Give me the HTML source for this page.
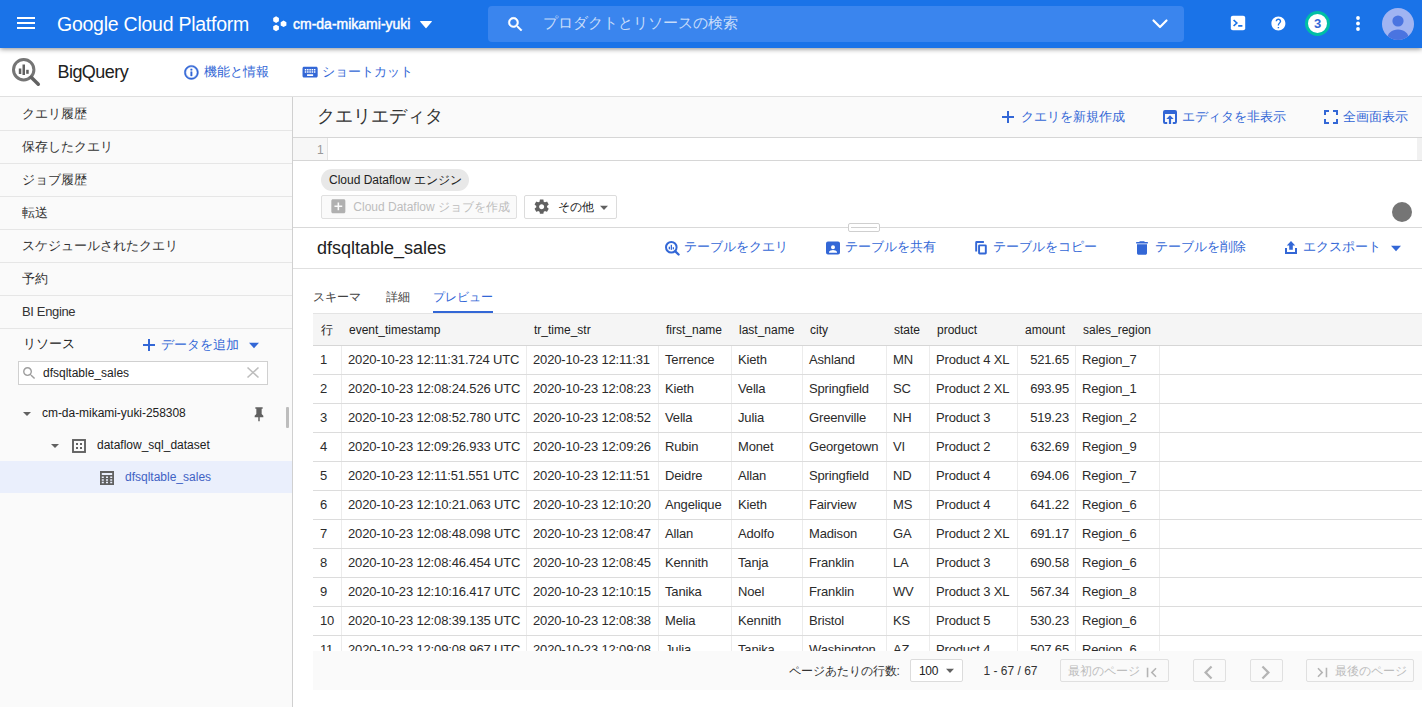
<!DOCTYPE html>
<html lang="ja">
<head>
<meta charset="utf-8">
<title>BigQuery</title>
<style>
*{box-sizing:border-box;margin:0;padding:0}
html,body{width:1422px;height:707px;overflow:hidden;background:#fff}
body{font-family:"Liberation Sans",sans-serif;font-size:13px;color:#212121;position:relative}
.abs{position:absolute}
svg{display:block;position:absolute}
.t{position:absolute;white-space:nowrap;line-height:1}

/* top bar */
#top{position:absolute;left:0;top:0;width:1422px;height:48px;background:#1a73e8;box-shadow:0 1px 5px rgba(0,0,0,.45);z-index:5}
#search{position:absolute;left:488px;top:6px;width:696px;height:36px;border-radius:4px;background:#3a85ee}
/* sub bar */
#sub{position:absolute;left:0;top:48px;width:1422px;height:49px;background:#fff;border-bottom:1px solid #e0e0e0;z-index:3}
.blue{color:#3367d6}

/* sidebar */
#side{position:absolute;left:0;top:97px;width:293px;height:610px;background:#fafafa;border-right:1px solid #d0d0d0}
.nav{position:absolute;left:0;width:292px;height:33px;border-bottom:1px solid #e6e6e6}
.nav span{position:absolute;left:22px;top:7.5px;font-size:13px;line-height:16px;white-space:nowrap;color:#333}

/* main */
#main{position:absolute;left:293px;top:97px;width:1129px;height:610px;background:#fff}

/* table */
#tbl{position:absolute;left:20px;top:216px;width:1109px;height:338px;overflow:hidden;background:#fff}
#tbl .hd{position:absolute;left:0;top:0;width:1109px;height:33px;background:#f5f5f5;border-top:1px solid #e4e4e4;border-bottom:1px solid #d6d6d6}
#tbl .hd span{position:absolute;top:0;height:32px;line-height:32.500px;font-size:12px;color:#212121;white-space:nowrap;padding-left:8px;overflow:hidden}
#tbl .r{position:absolute;left:0;width:1109px;height:29px;border-bottom:1px solid #dcdcdc}
#tbl .r span{position:absolute;top:0;height:28px;line-height:28px;font-size:13px;letter-spacing:-.15px;color:#2b2b2b;white-space:nowrap;padding-left:6px;border-left:1px solid #ececec;overflow:hidden}
#tbl .r span.c0{border-left:0;padding-left:7px}
#tbl .r span.c8{text-align:right;padding-right:6px;padding-left:0}
.c0{left:0px;width:28px}
.c1{left:28px;width:185px}
.c2{left:213px;width:132px}
.c3{left:345px;width:73px}
.c4{left:418px;width:71px}
.c5{left:489px;width:84px}
.c6{left:573px;width:43px}
.c7{left:616px;width:88px}
.c8{left:704px;width:58px}
.c9{left:762px;width:84px}
.c10{left:846px;width:263px}

/* footer */
#ft{position:absolute;left:20px;top:554px;width:1109px;height:39px;background:#fafafa}
.fb{position:absolute;top:8.500px;height:23px;border:1px solid #e0e0e0;border-radius:2px}
</style>
</head>
<body>

<div id="top">
  <svg style="left:14px;top:11px" width="24" height="24" viewBox="0 0 24 24"><path fill="#fff" d="M3 18h18v-2H3v2zm0-5h18v-2H3v2zm0-7v2h18V6H3z"/></svg>
  <div class="t" id="gcp" style="left:57px;top:15.3px;font-size:19.5px;letter-spacing:-.25px;color:#fff">Google Cloud Platform</div>
  <svg style="left:271.300px;top:15.300px" width="17.600" height="17.600" viewBox="0 0 16 16"><g fill="#fff"><path d="M4.6 1.2 7.2 2.7v3L4.6 7.2 2 5.7v-3z"/><path d="M4.6 8.8 7.2 10.3v3L4.6 14.8 2 13.3v-3z"/><path d="M11.4 5 14 6.5v3L11.4 11 8.8 9.5v-3z"/></g></svg>
  <div class="t" id="proj" style="left:293px;top:17px;font-size:14px;color:#fff;-webkit-text-stroke:.45px #fff">cm-da-mikami-yuki</div>
  <svg style="left:419px;top:20px" width="14" height="9" viewBox="0 0 14 9"><path fill="#fff" d="M1.6 1h10.8a.5.5 0 0 1 .4.8L7.4 8a.5.5 0 0 1-.8 0L1.2 1.8a.5.5 0 0 1 .4-.8z"/></svg>
  <div id="search">
    <svg style="left:17.500px;top:9px" width="18.800" height="18.800" viewBox="0 0 24 24"><path fill="#fff" stroke="#fff" stroke-width=".7" d="M15.5 14h-.79l-.28-.27A6.471 6.471 0 0 0 16 9.5 6.5 6.5 0 1 0 9.5 16c1.61 0 3.09-.59 4.23-1.57l.27.28v.79l5 4.99L20.49 19l-4.99-5zm-6 0C7.01 14 5 11.99 5 9.5S7.01 5 9.5 5 14 7.01 14 9.5 11.99 14 9.5 14z"/></svg>
    <div class="t" style="left:55px;top:9px;font-size:15px;color:rgba(255,255,255,.72)">プロダクトとリソースの検索</div>
    <svg style="left:663px;top:12px" width="18" height="12" viewBox="0 0 18 12"><path fill="none" stroke="#fff" stroke-width="2.2" stroke-linecap="round" stroke-linejoin="round" d="M2.5 2.5 9 9l6.500-6.500"/></svg>
  </div>
  <svg style="left:1230px;top:15px" width="16" height="16" viewBox="0 0 16 16"><rect x=".8" y=".8" width="14.4" height="14.4" rx="2" fill="#fff"/><path fill="none" stroke="#1a73e8" stroke-width="1.7" d="M3.6 5 6.8 8 3.600 11M8.200 10.800h4.200"/></svg>
  <svg style="left:1269.600px;top:14.600px" width="16.800" height="16.800" viewBox="0 0 24 24"><path fill="#fff" d="M12 2C6.480 2 2 6.480 2 12s4.480 10 10 10 10-4.480 10-10S17.520 2 12 2zm1 17h-2v-2h2v2zm2.070-7.750l-.9.920C13.450 12.900 13 13.500 13 15h-2v-.5c0-1.100.450-2.100 1.170-2.830l1.240-1.260c.370-.360.590-.860.590-1.410 0-1.100-.900-2-2-2s-2 .900-2 2H8c0-2.210 1.790-4 4-4s4 1.790 4 4c0 .880-.360 1.680-.930 2.250z"/></svg>
  <div class="abs" style="left:1305px;top:11px;width:25px;height:25px;border-radius:50%;background:#fff;border:3px solid #00bfa5"></div>
  <div class="t" style="left:1305px;top:17px;width:25px;text-align:center;font-size:13px;font-weight:bold;color:#3367d6">3</div>
  <svg style="left:1346px;top:11px" width="24" height="24" viewBox="0 0 24 24"><g fill="#fff"><circle cx="12" cy="7" r="1.9"/><circle cx="12" cy="12.500" r="1.9"/><circle cx="12" cy="18" r="1.9"/></g></svg>
  <svg style="left:1382px;top:7.500px" width="32" height="32" viewBox="0 0 32 32"><defs><clipPath id="av"><circle cx="16" cy="16" r="16"/></clipPath></defs><circle cx="16" cy="16" r="16" fill="#a0b4f2"/><g clip-path="url(#av)" fill="#4a74e0"><circle cx="16" cy="13" r="5.600"/><path d="M5 32c0-7 5-10.500 11-10.500S27 25 27 32z"/></g></svg>
</div>

<div id="sub">
  <svg style="left:11px;top:9px" width="30" height="30" viewBox="0 0 30 30"><circle cx="12.700" cy="12.700" r="10.200" fill="none" stroke="#757575" stroke-width="3"/><path d="M20.200 20.200 27.300 27.300" stroke="#616161" stroke-width="3.400" stroke-linecap="round"/><g fill="#616161"><rect x="7.800" y="11.500" width="2.500" height="5.500"/><rect x="11.500" y="7.500" width="2.500" height="10.500"/><rect x="15.200" y="12.800" width="2.500" height="4"/></g></svg>
  <div class="t" style="left:57.500px;top:15px;font-size:18px;letter-spacing:-.55px;color:#212121">BigQuery</div>
  <svg style="left:182.600px;top:15.600px" width="16.800" height="16.800" viewBox="0 0 24 24"><path fill="#3367d6" stroke="#3367d6" stroke-width=".7" d="M11 17h2v-6h-2v6zm1-15C6.480 2 2 6.480 2 12s4.480 10 10 10 10-4.480 10-10S17.520 2 12 2zm0 18c-4.410 0-8-3.590-8-8s3.590-8 8-8 8 3.590 8 8-3.590 8-8 8zM11 9h2V7h-2v2z"/></svg>
  <div class="t blue" style="left:203.500px;top:16.500px;font-size:13px">機能と情報</div>
  <svg style="left:300.700px;top:14.700px" width="18.200" height="18.200" viewBox="0 0 24 24"><path fill="#3367d6" d="M20 5H4c-1.100 0-1.990.900-1.990 2L2 17c0 1.100.900 2 2 2h16c1.100 0 2-.900 2-2V7c0-1.100-.900-2-2-2zm-9 3h2v2h-2V8zm0 3h2v2h-2v-2zM8 8h2v2H8V8zm0 3h2v2H8v-2zm-1 2H5v-2h2v2zm0-3H5V8h2v2zm9 7H8v-2h8v2zm0-4h-2v-2h2v2zm0-3h-2V8h2v2zm3 3h-2v-2h2v2zm0-3h-2V8h2v2z"/></svg>
  <div class="t blue" style="left:322px;top:16.500px;font-size:13px">ショートカット</div>
</div>

<div id="side">
  <div class="nav" style="top:1px"><span>クエリ履歴</span></div>
  <div class="nav" style="top:34px"><span>保存したクエリ</span></div>
  <div class="nav" style="top:67px"><span>ジョブ履歴</span></div>
  <div class="nav" style="top:100px"><span>転送</span></div>
  <div class="nav" style="top:133px"><span>スケジュールされたクエリ</span></div>
  <div class="nav" style="top:166px"><span>予約</span></div>
  <div class="nav" style="top:199px"><span style="letter-spacing:-.35px">BI Engine</span></div>
  <div class="t" style="left:22.500px;top:240px;font-size:13px;color:#212121">リソース</div>
  <svg style="left:141px;top:239.500px" width="16" height="16" viewBox="0 0 16 16"><path d="M8 2v12M2 8h12" stroke="#3367d6" stroke-width="2" fill="none"/></svg>
  <div class="t blue" style="left:161px;top:241px;font-size:13px">データを追加</div>
  <svg style="left:248px;top:245px" width="12" height="7" viewBox="0 0 12 7"><path fill="#3367d6" d="M1 .8h10L6 6.200z"/></svg>
  <div class="abs" style="left:18px;top:264px;width:250px;height:24px;background:#fff;border:1px solid #d0d0d0"></div>
  <svg style="left:21px;top:268px" width="16.500" height="16.500" viewBox="0 0 24 24"><path fill="#9e9e9e" d="M15.500 14h-.790l-.280-.270A6.471 6.471 0 0 0 16 9.500 6.500 6.500 0 1 0 9.500 16c1.610 0 3.090-.590 4.230-1.570l.270.280v.790l5 4.990L20.490 19l-4.990-5zm-6 0C7.010 14 5 11.990 5 9.500S7.010 5 9.500 5 14 7.010 14 9.500 11.990 14 9.500 14z"/></svg>
  <div class="t" style="left:43px;top:270px;font-size:12px;color:#212121">dfsqltable_sales</div>
  <svg style="left:246px;top:269px" width="14" height="13" viewBox="0 0 14 13"><path d="M1.500 1.500 12.500 11.500M12.500 1.500 1.500 11.500" stroke="#bdbdbd" stroke-width="1.600" fill="none"/></svg>

  <svg style="left:22px;top:314px" width="10" height="6" viewBox="0 0 10 6"><path fill="#616161" d="M1 1h8L5 5z"/></svg>
  <div class="t" style="left:42px;top:310px;font-size:12px;color:#212121;letter-spacing:-.04px">cm-da-mikami-yuki-258308</div>
  <svg style="left:251px;top:309px" width="16" height="16" viewBox="0 0 24 24"><path fill="#616161" d="M16 12V4h1.500V1.800h-11V4H8v8l-2.500 2.500v2.200h5.400V23h2.200v-6.300h5.400v-2.200z"/></svg>
  <div class="abs" style="left:286px;top:310px;width:3px;height:21px;background:#bdbdbd;border-radius:1px"></div>

  <svg style="left:50px;top:346px" width="10" height="6" viewBox="0 0 10 6"><path fill="#616161" d="M1 1h8L5 5z"/></svg>
  <svg style="left:72px;top:342px" width="14" height="14" viewBox="0 0 14 14"><rect x="1" y="1" width="12" height="12" fill="none" stroke="#616161" stroke-width="1.900"/><g fill="#616161"><rect x="4" y="4" width="2" height="2"/><rect x="8" y="4" width="2" height="2"/><rect x="4" y="8" width="2" height="2"/><rect x="8" y="8" width="2" height="2"/></g></svg>
  <div class="t" style="left:97px;top:342px;font-size:12px;color:#212121">dataflow_sql_dataset</div>

  <div class="abs" style="left:0;top:364px;width:292px;height:32px;background:#eaeffc"></div>
  <svg style="left:100px;top:374px" width="14" height="14" viewBox="0 0 14 14"><path fill="#616161" fill-rule="evenodd" d="M0 0h14v14H0zM1.800 2h10.400v2H1.800zM1.8 5.6h2v1.500h-2zM6.0 5.6h2v1.500h-2zM10.2 5.6h2v1.500h-2zM1.8 8.2h2v1.500h-2zM6.0 8.2h2v1.500h-2zM10.2 8.2h2v1.500h-2zM1.8 10.8h2v1.500h-2zM6.0 10.8h2v1.500h-2zM10.2 10.8h2v1.500h-2z"/></svg>
  <div class="t" style="left:125px;top:374px;font-size:12px;color:#3f62c4">dfsqltable_sales</div>
</div>

<div id="main">
  <!-- query editor header -->
  <div class="abs" style="left:0;top:0;width:1129px;height:41px;background:#fafafa;border-bottom:1px solid #d6d6d6"></div>
  <div class="t" style="left:24px;top:9.5px;font-size:18px;color:#333">クエリエディタ</div>
  <svg style="left:708px;top:13px" width="14" height="14" viewBox="0 0 14 14"><path d="M7 1v12M1 7h12" stroke="#3367d6" stroke-width="2" fill="none"/></svg>
  <div class="t blue" style="left:728px;top:12.8px;font-size:13px">クエリを新規作成</div>
  <svg style="left:870px;top:13px" width="14" height="14" viewBox="0 0 14 14"><path fill="#3367d6" d="M2 0h10a2 2 0 0 1 2 2v10a2 2 0 0 1-2 2h-2.200v-2H12V4H2v8h2.200v2H2a2 2 0 0 1-2-2V2a2 2 0 0 1 2-2z"/><path fill="#3367d6" d="M7 5.300l3.700 3.800H8.100V14H5.900V9.100H3.300z"/></svg>
  <div class="t blue" style="left:889px;top:12.8px;font-size:13px">エディタを非表示</div>
  <svg style="left:1031px;top:13px" width="14" height="14" viewBox="0 0 14 14"><path fill="none" stroke="#3367d6" stroke-width="2" d="M1 5V1h4M9 1h4v4M13 9v4H9M5 13H1V9"/></svg>
  <div class="t blue" style="left:1050px;top:12.8px;font-size:13px">全画面表示</div>

  <!-- editor line -->
  <div class="abs" style="left:0;top:41px;width:1129px;height:23px;background:#fff;border-bottom:1px solid #d6d6d6"></div>
  <div class="abs" style="left:0;top:41px;width:35px;height:22px;background:#f7f7f7;border-right:1px solid #e4e4e4"></div>
  <div class="t" style="left:24px;top:46.5px;font-size:12px;color:#999">1</div>
  <div class="abs" style="left:1124px;top:41px;width:5px;height:22px;background:#f1f1f1"></div>

  <!-- chip + buttons -->
  <div class="abs" style="left:28px;top:72px;width:148px;height:22px;border-radius:11px;background:#e8e8e8"></div>
  <div class="t" style="left:36px;top:77px;font-size:12px;color:#212121">Cloud Dataflow エンジン</div>

  <div class="abs" style="left:28px;top:98px;width:196px;height:24px;border:1px solid #e0e0e0;border-radius:2px;background:#fafafa"></div>
  <svg style="left:35.7px;top:100.4px" width="18.700" height="18.700" viewBox="0 0 24 24"><path fill="#b0b0b0" d="M19 3H5c-1.110 0-2 .900-2 2v14c0 1.100.890 2 2 2h14c1.100 0 2-.900 2-2V5c0-1.100-.900-2-2-2zm-2 10h-4v4h-2v-4H7v-2h4V7h2v4h4v2z"/></svg>
  <div class="t" style="left:60.3px;top:104px;font-size:12px;color:#bdbdbd">Cloud Dataflow ジョブを作成</div>

  <div class="abs" style="left:231px;top:98px;width:93px;height:24px;border:1px solid #dcdcdc;border-radius:2px;background:#fff"></div>
  <svg style="left:239.6px;top:101.3px" width="17.300" height="17.300" viewBox="0 0 24 24"><path fill="#616161" d="M19.430 12.980c.040-.320.070-.640.070-.980s-.030-.660-.070-.980l2.110-1.650c.190-.150.240-.420.120-.640l-2-3.460c-.120-.220-.390-.300-.610-.220l-2.490 1c-.520-.400-1.080-.730-1.690-.980l-.380-2.650C14.460 2.180 14.250 2 14 2h-4c-.250 0-.460.180-.490.420l-.380 2.650c-.610.250-1.170.590-1.690.980l-2.490-1c-.230-.090-.490 0-.610.220l-2 3.460c-.130.220-.070.490.120.640l2.110 1.650c-.040.320-.070.650-.070.980s.030.660.070.980l-2.110 1.650c-.190.150-.240.420-.120.640l2 3.460c.120.220.390.300.610.220l2.490-1c.520.400 1.080.730 1.690.980l.380 2.650c.030.240.240.420.490.420h4c.250 0 .460-.180.490-.420l.380-2.650c.610-.250 1.170-.590 1.690-.980l2.490 1c.230.090.490 0 .610-.220l2-3.460c.120-.220.070-.490-.120-.640l-2.110-1.650zM12 15.500c-1.930 0-3.500-1.570-3.500-3.500s1.570-3.500 3.500-3.500 3.500 1.570 3.500 3.500-1.570 3.500-3.500 3.500z"/></svg>
  <div class="t" style="left:264.5px;top:104px;font-size:12px;color:#212121">その他</div>
  <svg style="left:306px;top:107.5px" width="10" height="6" viewBox="0 0 10 6"><path fill="#616161" d="M1 .8h8L5 5z"/></svg>

  <div class="abs" style="left:1099px;top:105px;width:20px;height:20px;border-radius:50%;background:#757575"></div>

  <!-- splitter -->
  <div class="abs" style="left:0;top:130px;width:1129px;height:1px;background:#d9d9d9"></div>
  <div class="abs" style="left:555px;top:126px;width:32px;height:9px;border:1px solid #cfcfcf;border-radius:2px;background:#fff"></div>
  <div class="abs" style="left:558px;top:130px;width:26px;height:1px;background:#d0d0d0"></div>

  <!-- title + actions -->
  <div class="t" style="left:24px;top:142px;font-size:18px;color:#212121">dfsqltable_sales</div>

  <svg style="left:371px;top:143px" width="16" height="16" viewBox="0 0 16 16"><circle cx="7.300" cy="7.200" r="5.300" fill="none" stroke="#3367d6" stroke-width="2"/><path d="M11.300 11.300 14.600 14.500" stroke="#3367d6" stroke-width="2.300" stroke-linecap="round"/><g fill="#3367d6"><rect x="4.700" y="6.700" width="1.300" height="2.600"/><rect x="6.700" y="4.800" width="1.300" height="5"/><rect x="8.700" y="7.200" width="1.300" height="2.100"/></g></svg>
  <div class="t blue" style="left:391.3px;top:143px;font-size:13px">テーブルをクエリ</div>

  <svg style="left:531.5px;top:143px" width="16" height="16" viewBox="0 0 16 16"><path fill="#3367d6" fill-rule="evenodd" d="M3 1.500h10a2 2 0 0 1 2 2v9a2 2 0 0 1-2 2H3a2 2 0 0 1-2-2v-9a2 2 0 0 1 2-2zM3.500 3v.010h9V3zM8 5.200a2 2 0 1 0 0 4 2 2 0 0 0 0-4zM4 12.700h8v-.700c0-1.400-2.700-2.100-4-2.100s-4 .700-4 2.100z"/></svg>
  <div class="t blue" style="left:552.3px;top:143px;font-size:13px">テーブルを共有</div>

  <svg style="left:682px;top:144px" width="12" height="13.500" viewBox="0 0 12 14"><path fill="#3367d6" d="M0 11V1.500A1.500 1.500 0 0 1 1.500 0H9v2H2v9z"/><path fill="#3367d6" fill-rule="evenodd" d="M4.500 3.500h6A1.500 1.500 0 0 1 12 5v7.500a1.500 1.500 0 0 1-1.500 1.500h-6A1.500 1.500 0 0 1 3 12.500V5a1.500 1.500 0 0 1 1.500-1.500zM5 5.500V12h5V5.500z"/></svg>
  <div class="t blue" style="left:699.8px;top:143px;font-size:13px">テーブルをコピー</div>

  <svg style="left:839.4px;top:141.7px" width="20" height="18.100" viewBox="0 0 24 24" preserveAspectRatio="none"><path fill="#3367d6" d="M6 19c0 1.100.900 2 2 2h8c1.100 0 2-.900 2-2V7H6v12zM19 4h-3.500l-1-1h-5l-1 1H5v2h14V4z"/></svg>
  <div class="t blue" style="left:861.9px;top:143px;font-size:13px">テーブルを削除</div>

  <svg style="left:992px;top:144px" width="12" height="13.200" viewBox="0 0 12 13"><path fill="#3367d6" d="M6 0 10.200 4.300H7.800V8.600H4.200V4.300H1.800z"/><path fill="#3367d6" d="M0 7h2v4h8V7h2v6H0z"/></svg>
  <div class="t blue" style="left:1010px;top:143px;font-size:13px">エクスポート</div>
  <svg style="left:1097px;top:147.8px" width="12" height="7" viewBox="0 0 12 7"><path fill="#3367d6" d="M1 .8h10L6 6.200z"/></svg>

  <div class="abs" style="left:0;top:171px;width:1129px;height:1px;background:#e0e0e0"></div>

  <!-- tabs -->
  <div class="t" style="left:20px;top:193.7px;font-size:12px;color:#424242">スキーマ</div>
  <div class="t" style="left:92.5px;top:193.7px;font-size:12px;color:#424242">詳細</div>
  <div class="t" style="left:140px;top:193.7px;font-size:12px;color:#3367d6">プレビュー</div>
  <div class="abs" style="left:140px;top:214px;width:60px;height:2px;background:#3367d6"></div>

  <div id="tbl">
    <div class="hd"><span class="c0">行</span><span class="c1">event_timestamp</span><span class="c2">tr_time_str</span><span class="c3">first_name</span><span class="c4">last_name</span><span class="c5">city</span><span class="c6">state</span><span class="c7">product</span><span class="c8">amount</span><span class="c9">sales_region</span></div>
    <div class="r" style="top:33px"><span class="c0">1</span><span class="c1">2020-10-23 12:11:31.724 UTC</span><span class="c2">2020-10-23 12:11:31</span><span class="c3">Terrence</span><span class="c4">Kieth</span><span class="c5">Ashland</span><span class="c6">MN</span><span class="c7">Product 4 XL</span><span class="c8">521.65</span><span class="c9">Region_7</span><span class="c10"></span></div>
    <div class="r" style="top:62px"><span class="c0">2</span><span class="c1">2020-10-23 12:08:24.526 UTC</span><span class="c2">2020-10-23 12:08:23</span><span class="c3">Kieth</span><span class="c4">Vella</span><span class="c5">Springfield</span><span class="c6">SC</span><span class="c7">Product 2 XL</span><span class="c8">693.95</span><span class="c9">Region_1</span><span class="c10"></span></div>
    <div class="r" style="top:91px"><span class="c0">3</span><span class="c1">2020-10-23 12:08:52.780 UTC</span><span class="c2">2020-10-23 12:08:52</span><span class="c3">Vella</span><span class="c4">Julia</span><span class="c5">Greenville</span><span class="c6">NH</span><span class="c7">Product 3</span><span class="c8">519.23</span><span class="c9">Region_2</span><span class="c10"></span></div>
    <div class="r" style="top:120px"><span class="c0">4</span><span class="c1">2020-10-23 12:09:26.933 UTC</span><span class="c2">2020-10-23 12:09:26</span><span class="c3">Rubin</span><span class="c4">Monet</span><span class="c5">Georgetown</span><span class="c6">VI</span><span class="c7">Product 2</span><span class="c8">632.69</span><span class="c9">Region_9</span><span class="c10"></span></div>
    <div class="r" style="top:149px"><span class="c0">5</span><span class="c1">2020-10-23 12:11:51.551 UTC</span><span class="c2">2020-10-23 12:11:51</span><span class="c3">Deidre</span><span class="c4">Allan</span><span class="c5">Springfield</span><span class="c6">ND</span><span class="c7">Product 4</span><span class="c8">694.06</span><span class="c9">Region_7</span><span class="c10"></span></div>
    <div class="r" style="top:178px"><span class="c0">6</span><span class="c1">2020-10-23 12:10:21.063 UTC</span><span class="c2">2020-10-23 12:10:20</span><span class="c3">Angelique</span><span class="c4">Kieth</span><span class="c5">Fairview</span><span class="c6">MS</span><span class="c7">Product 4</span><span class="c8">641.22</span><span class="c9">Region_6</span><span class="c10"></span></div>
    <div class="r" style="top:207px"><span class="c0">7</span><span class="c1">2020-10-23 12:08:48.098 UTC</span><span class="c2">2020-10-23 12:08:47</span><span class="c3">Allan</span><span class="c4">Adolfo</span><span class="c5">Madison</span><span class="c6">GA</span><span class="c7">Product 2 XL</span><span class="c8">691.17</span><span class="c9">Region_6</span><span class="c10"></span></div>
    <div class="r" style="top:236px"><span class="c0">8</span><span class="c1">2020-10-23 12:08:46.454 UTC</span><span class="c2">2020-10-23 12:08:45</span><span class="c3">Kennith</span><span class="c4">Tanja</span><span class="c5">Franklin</span><span class="c6">LA</span><span class="c7">Product 3</span><span class="c8">690.58</span><span class="c9">Region_6</span><span class="c10"></span></div>
    <div class="r" style="top:265px"><span class="c0">9</span><span class="c1">2020-10-23 12:10:16.417 UTC</span><span class="c2">2020-10-23 12:10:15</span><span class="c3">Tanika</span><span class="c4">Noel</span><span class="c5">Franklin</span><span class="c6">WV</span><span class="c7">Product 3 XL</span><span class="c8">567.34</span><span class="c9">Region_8</span><span class="c10"></span></div>
    <div class="r" style="top:294px"><span class="c0">10</span><span class="c1">2020-10-23 12:08:39.135 UTC</span><span class="c2">2020-10-23 12:08:38</span><span class="c3">Melia</span><span class="c4">Kennith</span><span class="c5">Bristol</span><span class="c6">KS</span><span class="c7">Product 5</span><span class="c8">530.23</span><span class="c9">Region_6</span><span class="c10"></span></div>
    <div class="r" style="top:323px"><span class="c0">11</span><span class="c1">2020-10-23 12:09:08.967 UTC</span><span class="c2">2020-10-23 12:09:08</span><span class="c3">Julia</span><span class="c4">Tanika</span><span class="c5">Washington</span><span class="c6">AZ</span><span class="c7">Product 4</span><span class="c8">507.65</span><span class="c9">Region_6</span><span class="c10"></span></div>
  </div>
  <div id="ft">
    <div class="t" style="left:475.5px;top:13.5px;font-size:12px;color:#333">ページあたりの行数:</div>
    <div class="fb" style="left:597px;top:8px;width:52.500px;background:#fff;border-color:#dcdcdc"></div>
    <div class="t" style="left:606px;top:13.5px;font-size:12px;color:#212121;letter-spacing:-.3px">100</div>
    <svg style="left:632px;top:17px" width="10" height="6" viewBox="0 0 10 6"><path fill="#616161" d="M1 .8h8L5 5z"/></svg>
    <div class="t" style="left:670.5px;top:13.5px;font-size:12px;color:#333">1 - 67 / 67</div>

    <div class="fb" style="left:747px;top:8px;width:108.500px"></div>
    <div class="t" style="left:755.3px;top:13.5px;font-size:12px;color:#bdbdbd">最初のページ</div>
    <svg style="left:829px;top:11.5px" width="19" height="19" viewBox="0 0 24 24"><path fill="#b4b4b4" d="M18.410 16.590L13.820 12l4.590-4.590L17 6l-6 6 6 6zM6 6h2v12H6z"/></svg>

    <div class="fb" style="left:879.5px;top:8px;width:33px"></div>
    <svg style="left:882.3px;top:7.5px" width="27" height="27" viewBox="0 0 24 24"><path fill="#b4b4b4" d="M15.410 7.410L14 6l-6 6 6 6 1.410-1.410L10.830 12z"/></svg>
    <div class="fb" style="left:936.5px;top:8px;width:33px"></div>
    <svg style="left:939.4px;top:7.5px" width="27" height="27" viewBox="0 0 24 24"><path fill="#b4b4b4" d="M10 6L8.590 7.410 13.170 12l-4.580 4.590L10 18l6-6z"/></svg>

    <div class="fb" style="left:992.5px;top:8px;width:108.500px"></div>
    <svg style="left:999.5px;top:11.5px" width="19" height="19" viewBox="0 0 24 24"><path fill="#b4b4b4" d="M5.590 7.410L10.180 12l-4.590 4.590L7 18l6-6-6-6zM16 6h2v12h-2z"/></svg>
    <div class="t" style="left:1021.6px;top:13.5px;font-size:12px;color:#bdbdbd">最後のページ</div>
  </div>
</div>

</body>
</html>
